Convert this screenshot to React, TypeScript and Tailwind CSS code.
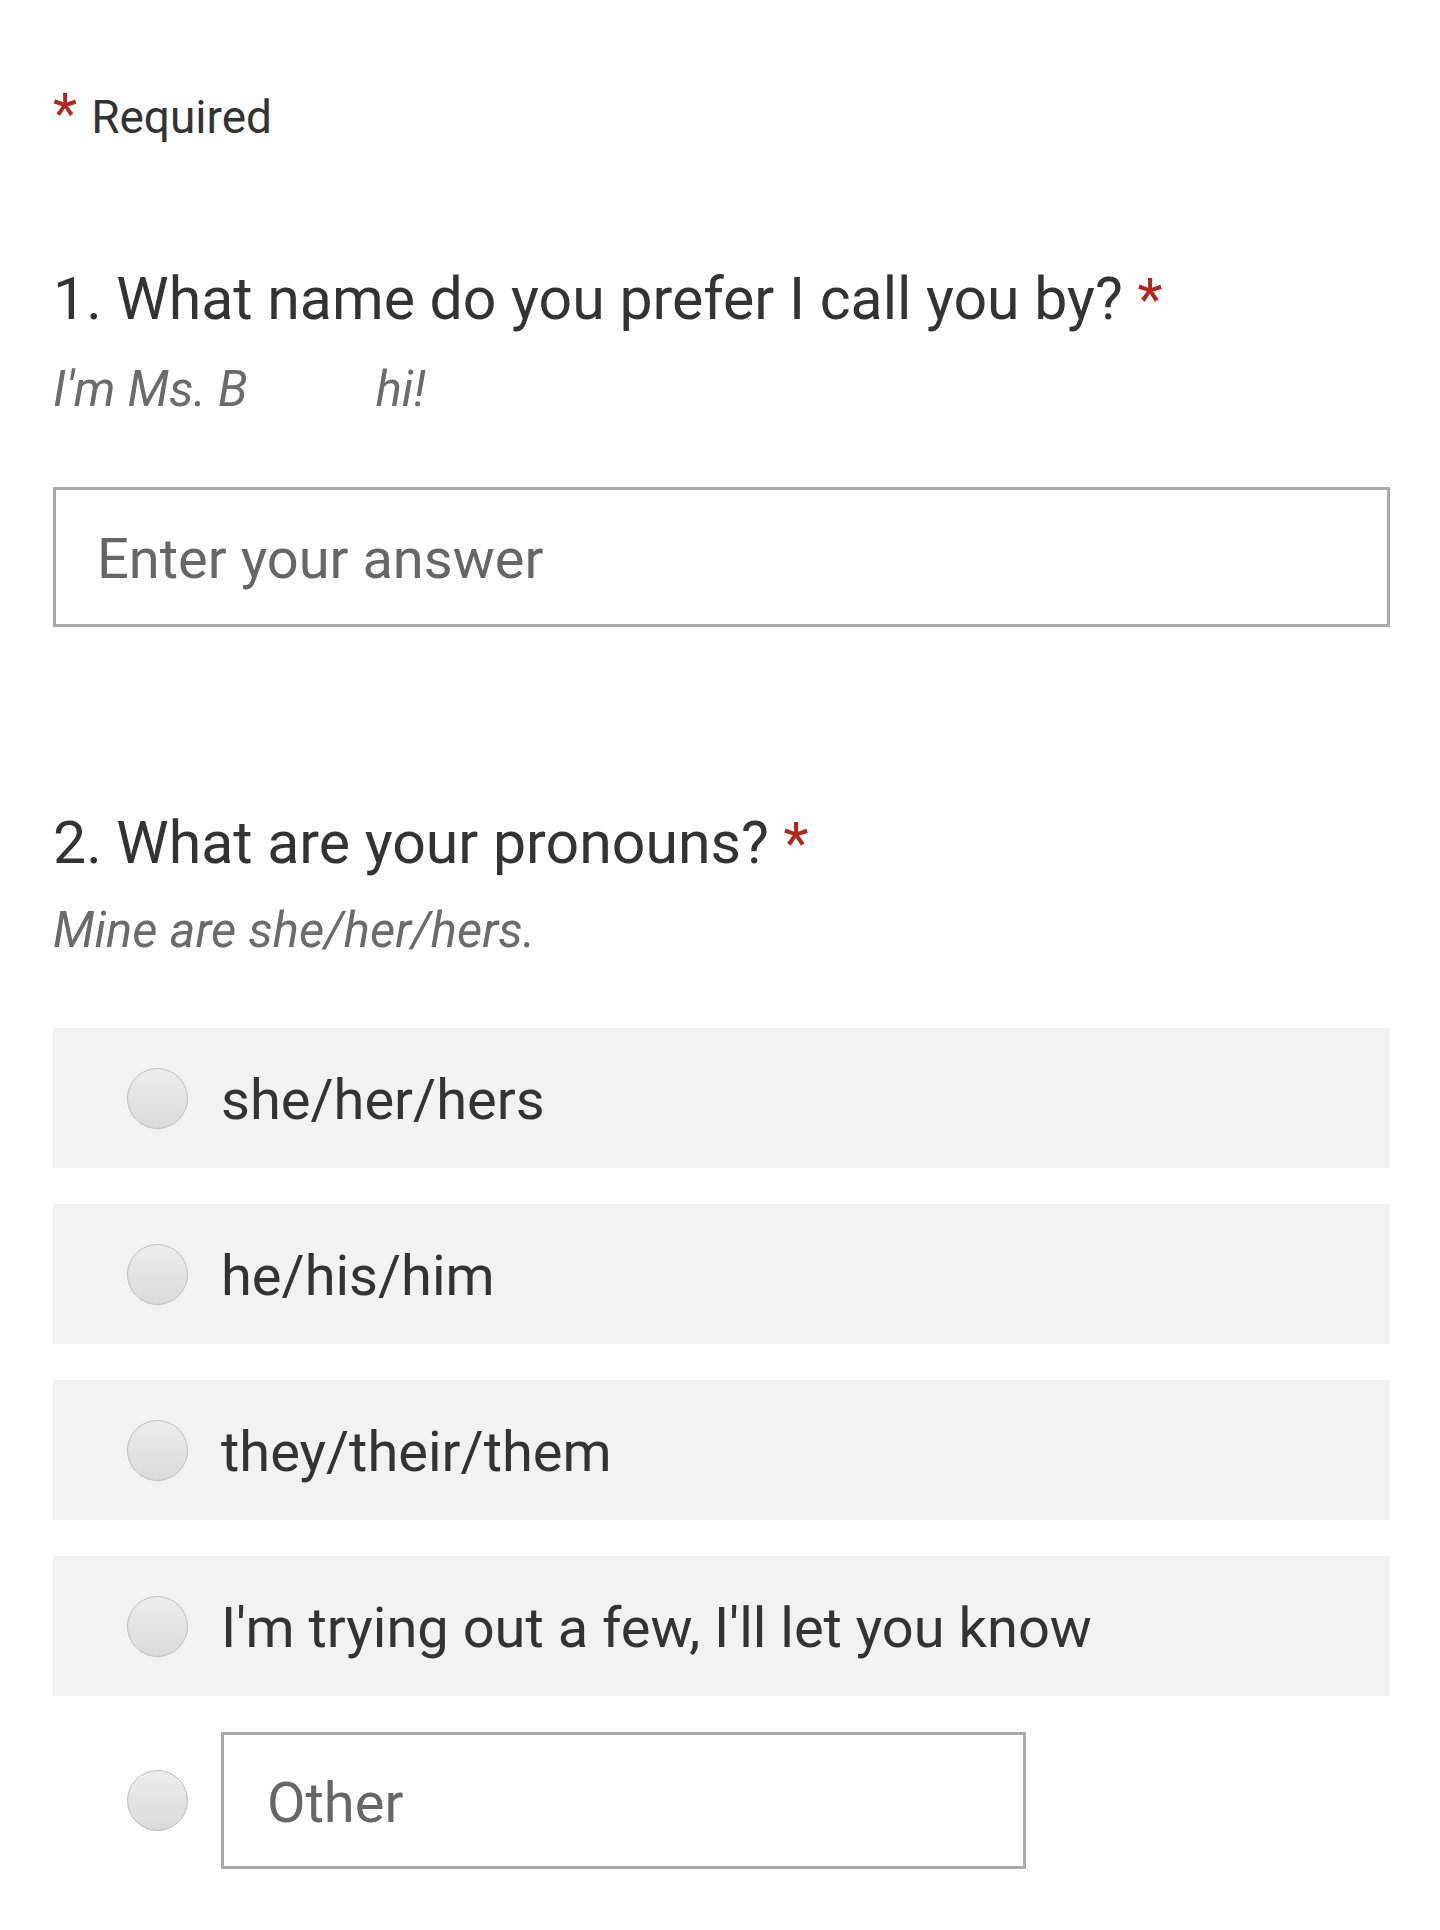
import React from 'react'

const options = [
  'she/her/hers',
  'he/his/him',
  'they/their/them',
  "I'm trying out a few, I'll let you know",
]

function Radio() {
  return (
    <span className="block w-[61px] h-[61px] shrink-0 rounded-full border border-[#bdbdbd] bg-gradient-to-b from-[#ececec] to-[#dadada]" />
  )
}

function Star() {
  return <span className="text-[#b3261e] text-[58px]">*</span>
}

export default function App() {
  return (
    <div className="min-h-[1930px] bg-white font-['Roboto',sans-serif] text-[#333333]">
      <div className="pl-[53px] pr-[50px] pt-[87px]">
        {/* required legend */}
        <div className="flex items-baseline gap-[14px] text-[46px] leading-[54px]">
          <span className="text-[#b3261e] text-[56px] leading-[54px]">*</span>
          <span>Required</span>
        </div>

        {/* question 1 */}
        <div className="mt-[121px] text-[59px] leading-[68px]">
          1. What name do you prefer I call you by? <Star />
        </div>
        <div className="mt-[28px] text-[49px] leading-[58px] italic text-[#6b6b6b] flex">
          <span>I'm Ms. B</span>
          <span className="ml-[128px]">hi!</span>
        </div>
        <div className="mt-[68px] h-[140px] border-[3px] border-[#aaaaaa] flex items-center pl-[41px] pt-[4px]">
          <span className="text-[56px] leading-none text-[#666666]">Enter your answer</span>
        </div>

        {/* question 2 */}
        <div className="mt-[182px] text-[59px] leading-[68px]">
          2. What are your pronouns? <Star />
        </div>
        <div className="mt-[25px] text-[49px] leading-[58px] italic text-[#6b6b6b]">
          Mine are she/her/hers.
        </div>

        <div className="mt-[68px] flex flex-col gap-[36px]">
          {options.map((o) => (
            <div key={o} className="h-[140px] bg-[#f2f2f2] flex items-center pl-[74px] gap-[33px]">
              <Radio />
              <span className="text-[56px] leading-none pt-[4px]">{o}</span>
            </div>
          ))}
          <div className="h-[137px] flex items-center pl-[74px] gap-[33px]">
            <Radio />
            <div className="w-[805px] h-[137px] border-[3px] border-[#aaaaaa] flex items-center pl-[43px] pt-[4px]">
              <span className="text-[56px] leading-none text-[#666666]">Other</span>
            </div>
          </div>
        </div>
      </div>
    </div>
  )
}
